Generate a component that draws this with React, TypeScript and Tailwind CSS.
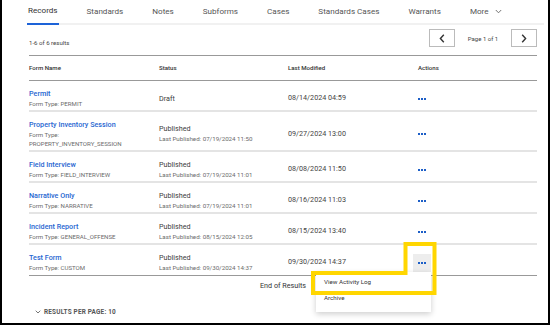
import React from "react";

const rows = [
  { name: "Permit", sub: ["Form Type: PERMIT"], status: "Draft", pub: "", date: "08/14/2024 04:59" },
  { name: "Property Inventory Session", sub: ["Form Type:", "PROPERTY_INVENTORY_SESSION"], status: "Published", pub: "Last Published: 07/19/2024 11:50", date: "09/27/2024 13:00" },
  { name: "Field Interview", sub: ["Form Type: FIELD_INTERVIEW"], status: "Published", pub: "Last Published: 07/19/2024 11:01", date: "08/08/2024 11:50" },
  { name: "Narrative Only", sub: ["Form Type: NARRATIVE"], status: "Published", pub: "Last Published: 07/19/2024 11:01", date: "08/16/2024 11:03" },
  { name: "Incident Report", sub: ["Form Type: GENERAL_OFFENSE"], status: "Published", pub: "Last Published: 08/15/2024 12:05", date: "08/15/2024 13:40" },
  { name: "Test Form", sub: ["Form Type: CUSTOM"], status: "Published", pub: "Last Published: 09/30/2024 14:37", date: "09/30/2024 14:37" },
];

const tabs = ["Records", "Standards", "Notes", "Subforms", "Cases", "Standards Cases", "Warrants"];

function Dots({ active }: { active?: boolean }) {
  return (
    <div className={`w-[18px] h-[18px] flex items-center justify-center gap-[1px] ${active ? "bg-[#ededed]" : ""}`}>
      <span className="w-[2px] h-[2px] bg-[#1d5fc7]" />
      <span className="w-[2px] h-[2px] bg-[#1d5fc7]" />
      <span className="w-[2px] h-[2px] bg-[#1d5fc7]" />
    </div>
  );
}

export default function App() {
  return (
    <div
      className="relative w-[550px] h-[325px] bg-white border-l-2 border-r-2 border-b-2 border-black overflow-hidden"
      style={{ fontFamily: "Roboto, 'Liberation Sans', sans-serif" }}
    >
      {/* Tabs */}
      <div className="ml-[26px] mr-[4px] h-[25px] border-b-2 border-[#f1f1f1] flex gap-[29px] text-[8.1px]">
        {tabs.map((t, i) => (
          <div
            key={t}
            className={`h-[25px] flex items-center pb-[2px] ${i === 0 ? "text-[#333] border-b-2 border-[#1d63d8] -mb-[2px] px-[1px] -mx-[1px]" : "text-[#555]"}`}
          >
            {t}
          </div>
        ))}
        <div className="h-[25px] flex items-center pb-[2px] text-[#555] gap-[6px]">
          More
          <svg width="7" height="5" viewBox="0 0 7 5">
            <polyline points="0.8,1 3.5,3.8 6.2,1" fill="none" stroke="#666" strokeWidth="0.9" />
          </svg>
        </div>
      </div>

      {/* Content */}
      <div className="ml-[27px] mr-[11px]">
        {/* Toolbar */}
        <div className="h-[30px] flex justify-between">
          <div className="pt-[14px] text-[6.1px] leading-[8px] text-[#444]">1-6 of 6 results</div>
          <div className="pt-[4px] flex items-start">
            <div className="w-[26px] h-[18px] border border-[#bbb] flex items-center justify-center">
              <svg width="6" height="9" viewBox="0 0 6 9">
                <polyline points="4.8,0.8 1.4,4.5 4.8,8.2" fill="none" stroke="#333" strokeWidth="1.4" />
              </svg>
            </div>
            <div className="w-[56px] h-[18px] flex items-center justify-center text-[6px] text-[#444]">Page 1 of 1</div>
            <div className="w-[26px] h-[18px] border border-[#bbb] flex items-center justify-center">
              <svg width="6" height="9" viewBox="0 0 6 9">
                <polyline points="1.2,0.8 4.6,4.5 1.2,8.2" fill="none" stroke="#333" strokeWidth="1.4" />
              </svg>
            </div>
          </div>
        </div>

        {/* Table header */}
        <div className="border-t border-b border-[#999] h-[26px] grid grid-cols-[130px_129px_125px_1fr] items-center text-[6.1px] font-medium text-[#333]">
          <div>Form Name</div>
          <div>Status</div>
          <div>Last Modified</div>
          <div className="pl-[5px]">Actions</div>
        </div>

        {/* Rows */}
        {rows.map((r, i) => (
          <div
            key={r.name}
            className={`grid grid-cols-[130px_129px_125px_1fr] items-center pt-[8px] ${i === rows.length - 1 ? "border-b border-[#999] pb-[2px]" : "border-b-2 border-[#e4e4e4] pb-[1px]"}`}
          >
            <div>
              <div className="text-[7.2px] leading-[10px] font-medium text-[#1f66d1]">{r.name}</div>
              {r.sub.map((s) => (
                <div key={s} className="text-[6.1px] leading-[9.5px] text-[#6b6b6b]">{s}</div>
              ))}
            </div>
            <div>
              <div className="text-[7.2px] leading-[10px] text-[#3d3d3d]">{r.status}</div>
              {r.pub && <div className="text-[6.2px] leading-[10px] text-[#6b6b6b]">{r.pub}</div>}
            </div>
            <div className="text-[7.2px] text-[#444]">{r.date}</div>
            <div>
              <Dots active={i === rows.length - 1} />
            </div>
          </div>
        ))}

        {/* End of results */}
        <div className="pt-[5px] text-center text-[7.2px] leading-[10px] text-[#333]">End of Results</div>
      </div>

      {/* Results per page */}
      <div className="mt-[16px] ml-[33px] flex items-center gap-[3px] text-[6.4px] leading-[10px] font-bold text-[#555] tracking-[0.2px]">
        <svg width="6" height="4" viewBox="0 0 6 4">
          <polyline points="0.7,0.7 3,3 5.3,0.7" fill="none" stroke="#666" strokeWidth="0.9" />
        </svg>
        RESULTS PER PAGE: 10
      </div>

      {/* Dropdown menu */}
      <div className="absolute left-[314px] top-[272px] w-[115px] bg-white shadow-[0_2px_6px_rgba(0,0,0,0.2)] pt-[3px] pb-[5px] text-[6.2px] text-[#333]">
        <div className="h-[16px] flex items-center pl-[8px]">View Activity Log</div>
        <div className="h-[16px] flex items-center pl-[8px]">Archive</div>
      </div>

      {/* Highlight */}
      <svg className="absolute left-0 top-0 pointer-events-none" width="550" height="325">
        <polygon
          points="313,273 405.5,273 405.5,244 434.5,244 434.5,293 313,293"
          fill="none"
          stroke="#ffd600"
          strokeWidth="4"
          transform="translate(-2,0)"
        />
      </svg>
    </div>
  );
}
